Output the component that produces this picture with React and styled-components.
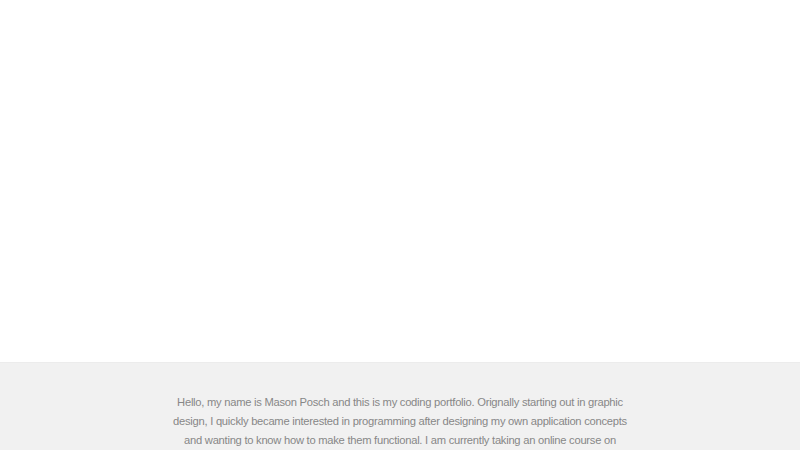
import React from "react";
import styled, { createGlobalStyle } from "styled-components";

const Global = createGlobalStyle`
  html, body { margin: 0; padding: 0; background: #ffffff; }
  body { font-family: "Liberation Sans", Arial, sans-serif; }
`;

const Hero = styled.header`
  height: 362px;
  background: #ffffff;
`;

const About = styled.section`
  background: #f1f1f1;
  border-top: 1px solid #ececec;
  padding: 30px 20px 40px;
  display: flex;
  justify-content: center;
`;

const Bio = styled.p`
  margin: 0;
  width: 458px;
  text-align: center;
  font-size: 11.2px;
  letter-spacing: -0.26px;
  line-height: 19px;
  color: #878787;
`;

export default function App() {
  return (
    <>
      <Global />
      <Hero />
      <About>
        <Bio>
          Hello, my name is Mason Posch and this is my coding portfolio. Orignally starting out in graphic
          design, I quickly became interested in programming after designing my own application concepts
          and wanting to know how to make them functional. I am currently taking an online course on
          Codecademy and continuing to build projects of my own.
        </Bio>
      </About>
    </>
  );
}
